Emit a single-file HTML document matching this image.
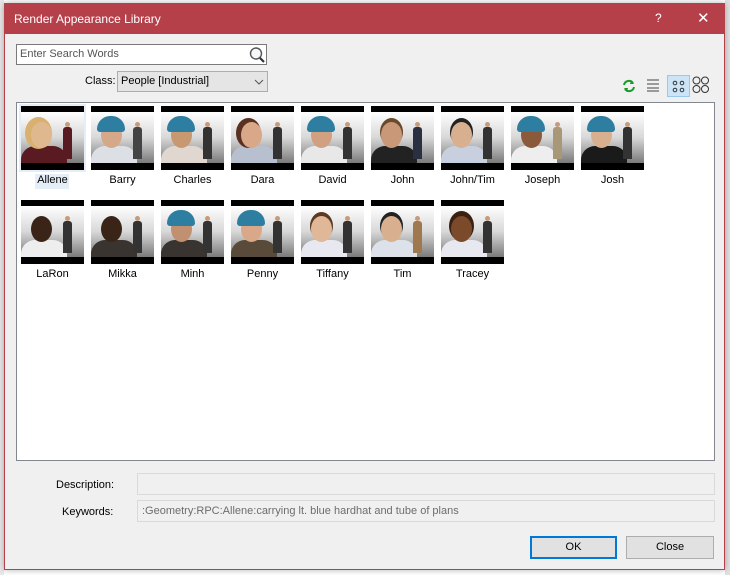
<!DOCTYPE html>
<html><head><meta charset="utf-8"><style>
*{box-sizing:border-box;margin:0;padding:0}
body{width:730px;height:575px;overflow:hidden;background:#fff;font-family:"Liberation Sans",sans-serif;font-size:11px;color:#000;position:relative}
.abs{position:absolute}
#dlg{left:4px;top:3px;width:721px;height:567px;background:#f0f0f0;border:1px solid #b5404a;box-shadow:0 0 6px rgba(0,0,0,.3)}
#title{left:0;top:0;width:719px;height:30px;background:#b5404a;color:#fff;font-size:12px}
.t{position:absolute;width:63px;height:64px;background:#000;overflow:hidden}
.t .bg{position:absolute;left:0;top:6px;width:63px;height:51px;background:linear-gradient(#fff 0%,#d8d8d8 50%,#7a7a7a 100%);overflow:hidden}
.t .hd{position:absolute;left:10px;top:10px;width:21px;height:26px;border-radius:50%}
.t .bd{position:absolute;left:0;top:34px;width:46px;height:24px;border-radius:14px 14px 0 0}
.t .ht{position:absolute;left:6px;top:4px;width:28px;height:16px;border-radius:14px 14px 3px 3px;background:#2d7ea0}
.t .sh{position:absolute;left:44px;top:10px;width:5px;height:5px;border-radius:50%;background:#c79a7c}
.t .sb{position:absolute;left:42px;top:15px;width:9px;height:32px;background:#333;border-radius:3px 3px 0 0}
.lbl{position:absolute;width:63px;text-align:center;font-size:11px}
.fld{background:#f0f0f0;border:1px solid #d9d9d9}
</style></head><body>
<div class="abs" style="left:0;top:0;width:4px;height:575px;background:#e8e8e8"></div>
<div class="abs" style="left:725px;top:0;width:5px;height:575px;background:#e0e0e0"></div>
<div id="dlg" class="abs">
 <div id="title" class="abs"><span class="abs" style="left:9px;top:8px">Render Appearance Library</span><span class="abs" style="left:650px;top:7px">?</span><span class="abs" style="left:692px;top:5px;font-size:15px">✕</span></div>
</div>
<div class="abs" style="left:16px;top:44px;width:251px;height:21px;background:#fff;border:1px solid #7a7a7a"><span class="abs" style="left:3px;top:3px;color:#555">Enter Search Words</span>
<svg class="abs" style="left:231px;top:1px" width="18" height="18"><circle cx="8" cy="7.5" r="5.5" fill="#f4f8fb" stroke="#555" stroke-width="1.4"/><line x1="12" y1="12" x2="16" y2="16" stroke="#333" stroke-width="2.2"/></svg></div>
<span class="abs" style="left:85px;top:75px">Class:</span>
<div class="abs" style="left:117px;top:71px;width:151px;height:21px;background:#e5e5e5;border:1px solid #adadad"><span class="abs" style="left:3px;top:3px">People [Industrial]</span><svg class="abs" style="left:136px;top:7px" width="10" height="6"><path d="M1 1L5 5L9 1" fill="none" stroke="#555"/></svg></div>
<svg class="abs" style="left:622px;top:79px" width="14" height="14"><path d="M2 6A5 5 0 0 1 11 4M12 8A5 5 0 0 1 3 10" fill="none" stroke="#1a9a2a" stroke-width="2"/><path d="M9 1L12 5L8 5Z M5 13L2 9L6 9Z" fill="#1a9a2a"/></svg>
<svg class="abs" style="left:646px;top:78px" width="14" height="14"><path d="M1 2H13M1 6H13M1 10H13M1 13H13" stroke="#444"/></svg>
<div class="abs" style="left:667px;top:75px;width:23px;height:22px;background:#cce4f7;border:1px solid #99c8ef"></div>
<svg class="abs" style="left:672px;top:80px" width="14" height="14"><g fill="none" stroke="#333"><circle cx="3" cy="3" r="1.8"/><circle cx="10" cy="3" r="1.8"/><circle cx="3" cy="10" r="1.8"/><circle cx="10" cy="10" r="1.8"/></g></svg>
<svg class="abs" style="left:692px;top:76px" width="18" height="18"><g fill="none" stroke="#333"><circle cx="4.5" cy="4.5" r="3.5"/><circle cx="13" cy="4.5" r="3.5"/><circle cx="4.5" cy="13" r="3.5"/><circle cx="13" cy="13" r="3.5"/></g></svg>
<div class="abs" style="left:16px;top:102px;width:699px;height:359px;background:#fff;border:1px solid #828790"></div>
<div class="abs" style="left:19px;top:104px;width:67px;height:68px;background:#e5eef7"></div>
<div class="abs" style="left:35px;top:174px;width:34px;height:15px;background:#e5eef7"></div>

<div class="t" style="left:21px;top:106px"><div class="bg"><div class="bd" style="background:#5a1a22"></div><div class="hd" style="background:#e0b890;box-shadow:-3px -2px 0 3px #d8b070"></div><div class="sh"></div><div class="sb" style="background:#5a1a22"></div></div></div>
<div class="lbl" style="left:21px;top:174px">Allene</div>
<div class="t" style="left:91px;top:106px"><div class="bg"><div class="bd" style="background:#dcdfe4"></div><div class="hd" style="background:#d4a888"></div><div class="ht"></div><div class="sh"></div><div class="sb" style="background:#444"></div></div></div>
<div class="lbl" style="left:91px;top:174px">Barry</div>
<div class="t" style="left:161px;top:106px"><div class="bg"><div class="bd" style="background:#e0d8d0"></div><div class="hd" style="background:#c89870"></div><div class="ht"></div><div class="sh"></div><div class="sb"></div></div></div>
<div class="lbl" style="left:161px;top:174px">Charles</div>
<div class="t" style="left:231px;top:106px"><div class="bg"><div class="bd" style="background:#b8c0d0"></div><div class="hd" style="background:#d8a888;box-shadow:-3px -2px 0 2px #5a3020"></div><div class="sh"></div><div class="sb"></div></div></div>
<div class="lbl" style="left:231px;top:174px">Dara</div>
<div class="t" style="left:301px;top:106px"><div class="bg"><div class="bd" style="background:#e8e8e8"></div><div class="hd" style="background:#d0a080"></div><div class="ht"></div><div class="sh"></div><div class="sb"></div></div></div>
<div class="lbl" style="left:301px;top:174px">David</div>
<div class="t" style="left:371px;top:106px"><div class="bg"><div class="bd" style="background:#222"></div><div class="hd" style="background:#c89878;box-shadow:0 -3px 0 1px #6a4a2a"></div><div class="sh"></div><div class="sb" style="background:#2a3040"></div></div></div>
<div class="lbl" style="left:371px;top:174px">John</div>
<div class="t" style="left:441px;top:106px"><div class="bg"><div class="bd" style="background:#c8d0e0"></div><div class="hd" style="background:#d8b090;box-shadow:0 -3px 0 1px #222"></div><div class="sh"></div><div class="sb"></div></div></div>
<div class="lbl" style="left:441px;top:174px">John/Tim</div>
<div class="t" style="left:511px;top:106px"><div class="bg"><div class="bd" style="background:#eee"></div><div class="hd" style="background:#8a5a3a"></div><div class="ht"></div><div class="sh"></div><div class="sb" style="background:#a89878"></div></div></div>
<div class="lbl" style="left:511px;top:174px">Joseph</div>
<div class="t" style="left:581px;top:106px"><div class="bg"><div class="bd" style="background:#1a1a1a"></div><div class="hd" style="background:#d8b090"></div><div class="ht"></div><div class="sh"></div><div class="sb"></div></div></div>
<div class="lbl" style="left:581px;top:174px">Josh</div>

<div class="t" style="left:21px;top:200px"><div class="bg"><div class="bd" style="background:#eee"></div><div class="hd" style="background:#3a2418"></div><div class="sh"></div><div class="sb"></div></div></div>
<div class="lbl" style="left:21px;top:268px">LaRon</div>
<div class="t" style="left:91px;top:200px"><div class="bg"><div class="bd" style="background:#3a3430"></div><div class="hd" style="background:#3a2418"></div><div class="sh"></div><div class="sb"></div></div></div>
<div class="lbl" style="left:91px;top:268px">Mikka</div>
<div class="t" style="left:161px;top:200px"><div class="bg"><div class="bd" style="background:#3a3430"></div><div class="hd" style="background:#c09070"></div><div class="ht"></div><div class="sh"></div><div class="sb"></div></div></div>
<div class="lbl" style="left:161px;top:268px">Minh</div>
<div class="t" style="left:231px;top:200px"><div class="bg"><div class="bd" style="background:#5a4a3a"></div><div class="hd" style="background:#d8a888"></div><div class="ht"></div><div class="sh"></div><div class="sb"></div></div></div>
<div class="lbl" style="left:231px;top:268px">Penny</div>
<div class="t" style="left:301px;top:200px"><div class="bg"><div class="bd" style="background:#e8e8f0"></div><div class="hd" style="background:#e0b898;box-shadow:0 -3px 0 1px #5a3a22"></div><div class="sh"></div><div class="sb"></div></div></div>
<div class="lbl" style="left:301px;top:268px">Tiffany</div>
<div class="t" style="left:371px;top:200px"><div class="bg"><div class="bd" style="background:#dde2ea"></div><div class="hd" style="background:#d8b090;box-shadow:0 -3px 0 1px #222"></div><div class="sh"></div><div class="sb" style="background:#a07850"></div></div></div>
<div class="lbl" style="left:371px;top:268px">Tim</div>
<div class="t" style="left:441px;top:200px"><div class="bg"><div class="bd" style="background:#e8e8f0"></div><div class="hd" style="background:#7a4a2a;box-shadow:0 -3px 0 2px #3a2010"></div><div class="sh"></div><div class="sb"></div></div></div>
<div class="lbl" style="left:441px;top:268px">Tracey</div>

<span class="abs" style="left:56px;top:479px">Description:</span>
<div class="abs fld" style="left:137px;top:473px;width:578px;height:22px"></div>
<span class="abs" style="left:62px;top:506px">Keywords:</span>
<div class="abs fld" style="left:137px;top:500px;width:578px;height:22px"><span class="abs" style="left:4px;top:4px;color:#6d6d6d">:Geometry:RPC:Allene:carrying lt. blue hardhat and tube of plans</span></div>
<div class="abs" style="left:530px;top:536px;width:87px;height:23px;background:#e1e1e1;border:2px solid #0078d7;text-align:center;line-height:19px">OK</div>
<div class="abs" style="left:626px;top:536px;width:88px;height:23px;background:#e1e1e1;border:1px solid #adadad;text-align:center;line-height:21px">Close</div>
</body></html>
